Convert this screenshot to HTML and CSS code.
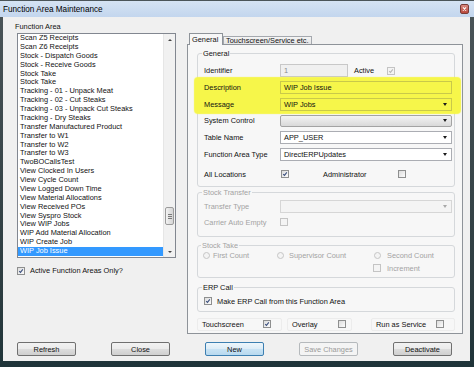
FILE: index.html
```html
<!DOCTYPE html>
<html>
<head>
	<title>Function Area Maintenance</title>
	<meta charset="UTF-8">
	<link rel="stylesheet" href="styles.css">
</head>
<body>
	<div class="window">
		<div class="titlebar">
			<span class="title">Function Area Maintenance</span>
			<span class="close-btn">
				<svg viewBox="0 0 9 10" width="9" height="10">
					<path d="M2.5 3 L6.5 7 M6.5 3 L2.5 7" stroke="#fff" stroke-width="1.3"/>
				</svg>
			</span>
		</div>

		<div class="client">
			<div class="main">
				<div class="left">
					<div class="caption">Function Area</div>
					<div class="listbox">
						<div class="list-items">
							<div class="list-item">Scan Z5 Receipts</div>
							<div class="list-item">Scan Z6 Receipts</div>
							<div class="list-item">Stock - Dispatch Goods</div>
							<div class="list-item">Stock - Receive Goods</div>
							<div class="list-item">Stock Take</div>
							<div class="list-item">Stock Take</div>
							<div class="list-item">Tracking - 01 - Unpack Meat</div>
							<div class="list-item">Tracking - 02 - Cut Steaks</div>
							<div class="list-item">Tracking - 03 - Unpack Cut Steaks</div>
							<div class="list-item">Tracking - Dry Steaks</div>
							<div class="list-item">Transfer Manufactured Product</div>
							<div class="list-item">Transfer to W1</div>
							<div class="list-item">Transfer to W2</div>
							<div class="list-item">Transfer to W3</div>
							<div class="list-item">TwoBOCallsTest</div>
							<div class="list-item">View Clocked In Users</div>
							<div class="list-item">View Cycle Count</div>
							<div class="list-item">View Logged Down Time</div>
							<div class="list-item">View Material Allocations</div>
							<div class="list-item">View Received POs</div>
							<div class="list-item">View Syspro Stock</div>
							<div class="list-item">View WIP Jobs</div>
							<div class="list-item">WIP Add Material Allocation</div>
							<div class="list-item">WIP Create Job</div>
							<div class="list-item selected">WIP Job Issue</div>
						</div>
						<div class="scrollbar">
							<div class="sb-btn"><span class="arrow-up"></span></div>
							<div class="sb-track">
								<div class="sb-thumb"><span class="grip"></span></div>
							</div>
							<div class="sb-btn"><span class="arrow-down"></span></div>
						</div>
					</div>
					<div class="check-row">
						<span class="check checked">
							<svg viewBox="0 0 8 8"><path d="M1.6 4.1 L3.3 5.9 L6.4 1.9"/></svg>
						</span>
						Active Function Areas Only?
					</div>
				</div>

				<div class="right">
					<div class="tabs">
						<div class="tab active">General</div>
						<div class="tab">Touchscreen/Service etc.</div>
					</div>
					<div class="tab-panel">
						<fieldset class="group group-general">
							<legend>General</legend>
							<div class="rows">
								<div class="field-row">
									<span class="label">Identifier</span>
									<div class="controls">
										<span class="textbox disabled id-box">1</span>
										<span class="active-label">Active</span>
										<span class="check checked disabled">
											<svg viewBox="0 0 8 8"><path d="M1.6 4.1 L3.3 5.9 L6.4 1.9"/></svg>
										</span>
									</div>
								</div>
								<div class="highlight">
									<div class="field-row">
										<span class="label">Description</span>
										<span class="textbox marked">WIP Job Issue</span>
									</div>
									<div class="field-row">
										<span class="label">Message</span>
										<div class="combo marked"><span>WIP Jobs</span><span class="arrow"></span></div>
									</div>
								</div>
								<div class="field-row">
									<span class="label">System Control</span>
									<div class="combo dropdown"><span></span><span class="arrow"></span></div>
								</div>
								<div class="field-row">
									<span class="label">Table Name</span>
									<div class="combo"><span>APP_USER</span><span class="arrow"></span></div>
								</div>
								<div class="field-row">
									<span class="label">Function Area Type</span>
									<div class="combo"><span>DirectERPUpdates</span><span class="arrow"></span></div>
								</div>
								<div class="field-row locations-row">
									<span class="label">All Locations</span>
									<div class="controls">
										<span class="check checked">
											<svg viewBox="0 0 8 8"><path d="M1.6 4.1 L3.3 5.9 L6.4 1.9"/></svg>
										</span>
										<span class="admin-label">Administrator</span>
										<span class="check"></span>
									</div>
								</div>
							</div>
						</fieldset>

						<fieldset class="group group-transfer disabled-group">
							<legend>Stock Transfer</legend>
							<div class="rows">
								<div class="field-row">
									<span class="label">Transfer Type</span>
									<div class="combo disabled"><span></span><span class="arrow"></span></div>
								</div>
								<div class="field-row short-row">
									<span class="label">Carrier Auto Empty</span>
									<span class="check disabled"></span>
								</div>
							</div>
						</fieldset>

						<fieldset class="group group-take disabled-group">
							<legend>Stock Take</legend>
							<div class="take-grid">
								<div class="option"><span class="radio"></span>First Count</div>
								<div class="option"><span class="radio"></span>Supervisor Count</div>
								<div class="option"><span class="radio"></span>Second Count</div>
								<div class="option increment"><span class="check disabled"></span>Increment</div>
							</div>
						</fieldset>

						<fieldset class="group group-erp">
							<legend>ERP Call</legend>
							<div class="option erp-option">
								<span class="check checked">
									<svg viewBox="0 0 8 8"><path d="M1.6 4.1 L3.3 5.9 L6.4 1.9"/></svg>
								</span>
								Make ERP Call from this Function Area
							</div>
						</fieldset>

						<div class="flags">
							<div class="flag flag-touch">
								<span class="flag-label">Touchscreen</span>
								<span class="check checked">
									<svg viewBox="0 0 8 8"><path d="M1.6 4.1 L3.3 5.9 L6.4 1.9"/></svg>
								</span>
							</div>
							<div class="flag flag-overlay">
								<span class="flag-label">Overlay</span>
								<span class="check"></span>
							</div>
							<div class="flag flag-service">
								<span class="flag-label">Run as Service</span>
								<span class="check"></span>
							</div>
						</div>
					</div>
				</div>
			</div>

			<div class="buttons">
				<button>Refresh</button>
				<button>Close</button>
				<button class="default">New</button>
				<button class="disabled">Save Changes</button>
				<button>Deactivate</button>
			</div>
		</div>
	</div>
</body>
</html>
```

FILE: styles.css
```css
* {
	box-sizing: border-box;
}

body {
	margin: 0;
	width: 474px;
	height: 367px;
	overflow: hidden;
	font-family: 'Liberation Sans', Arial, sans-serif;
	font-size: 7.4px;
	color: #111;
	background: #3a4548;
}

.window {
	width: 474px;
	height: 367px;
	display: flex;
	flex-direction: column;
	padding: 1px 4px 6px 3px;
	background: linear-gradient(to bottom, #4b5559, #2c3c40 80%, #1f3439);
}

/* title bar */
.titlebar {
	height: 16px;
	margin: 0 -4px 0 -3px;
	display: flex;
	align-items: center;
	justify-content: space-between;
	padding: 0 5px 0 3px;
	background: linear-gradient(to bottom, #d5e3f3, #c3d6ee);
}

.title {
	font-size: 8.2px;
	color: #000;
}

.close-btn {
	width: 9px;
	height: 10px;
	border-radius: 2px;
	background: linear-gradient(to bottom, #d88a80, #b9483c);
	border: 1px solid #7a3b35;
	display: flex;
	align-items: center;
	justify-content: center;
}

.close-btn svg {
	display: block;
}

.client {
	flex: 1;
	background: #f0f0f0;
	padding: 0 0 5px 14px;
	display: flex;
	flex-direction: column;
}

.main {
	display: flex;
	align-items: flex-start;
	height: 317px;
}

/* left column */
.left {
	width: 159px;
	padding-top: 5px;
}

.caption {
	line-height: 9px;
	margin-left: -2px;
}

.listbox {
	margin-top: 2px;
	height: 225px;
	border: 1px solid #828790;
	background: white;
	display: flex;
}

.list-items {
	flex: 1;
}

.list-item {
	line-height: 8.875px;
	height: 8.875px;
	padding-left: 2px;
	white-space: nowrap;
	overflow: hidden;
}

.list-item.selected {
	background: #3399ff;
	color: white;
}

.scrollbar {
	width: 12px;
	display: flex;
	flex-direction: column;
	background: #f1f1f1;
	border-left: 1px solid #e6e6e6;
}

.sb-btn {
	height: 11px;
	display: flex;
	align-items: center;
	justify-content: center;
}

.arrow-up {
	border-left: 2px solid transparent;
	border-right: 2px solid transparent;
	border-bottom: 2px solid #444;
}

.arrow-down {
	border-left: 2px solid transparent;
	border-right: 2px solid transparent;
	border-top: 2px solid #444;
}

.sb-track {
	flex: 1;
}

.sb-thumb {
	margin: 162px 1px 0 1px;
	height: 18px;
	border: 1px solid #9b9b9b;
	border-radius: 2px;
	background: linear-gradient(to right, #f3f3f3, #e2e2e2 50%, #d6d6d6);
	display: flex;
	align-items: center;
	justify-content: center;
}

.grip {
	width: 4px;
	height: 5px;
	background: repeating-linear-gradient(to bottom, #7a7a7a 0 1px, transparent 1px 2px);
}

.check-row {
	margin-top: 8px;
	height: 9px;
	display: flex;
	align-items: center;
	gap: 5px;
}

/* checkboxes and radios */
.check {
	width: 8px;
	height: 8px;
	flex: none;
	border: 1px solid #8e8f8f;
	background: linear-gradient(135deg, #dcdcdc, #fcfcfc);
	display: inline-block;
}

.check svg {
	display: block;
	width: 6px;
	height: 6px;
	fill: none;
	stroke: #3b4f7e;
	stroke-width: 1.4;
}

.check.disabled {
	border-color: #c4c4c4;
	background: #f4f4f4;
}

.check.disabled svg {
	stroke: #b8b8b8;
}

.radio {
	width: 7px;
	height: 7px;
	flex: none;
	border: 1px solid #c6c6c6;
	border-radius: 50%;
	background: #f4f4f4;
}

/* tabs */
.right {
	margin-left: 11px;
	margin-top: 16px;
	width: 276px;
}

.tabs {
	display: flex;
	align-items: flex-end;
	height: 11px;
	padding-left: 2px;
}

.tab {
	height: 8px;
	line-height: 7px;
	padding: 0 2px;
	border: 1px solid #a4a8ae;
	border-bottom: none;
	background: linear-gradient(to bottom, #f4f4f4, #e4e4e4);
	white-space: nowrap;
}

.tab.active {
	position: relative;
	z-index: 1;
	height: 12px;
	line-height: 11px;
	margin-bottom: -1px;
	width: 34px;
	border-color: #8e9399;
	background: #f7f7f7;
}

.tab-panel {
	height: 290px;
	border: 1px solid #8e9399;
	background: #f7f7f7;
	padding: 4px 7px 0 9px;
	overflow: hidden;
}

/* group boxes */
.group {
	margin: 0;
	padding: 0 2px 5px 6px;
	border: 1px solid #d5d8db;
	border-radius: 3px;
	min-width: 0;
}

legend {
	line-height: 9px;
	padding: 0 1px;
	margin-left: -2px;
}

.disabled-group,
.disabled-group legend {
	color: #a3a3a3;
}

.rows {
	display: flex;
	flex-direction: column;
	gap: 3.8px;
}

.group-general .rows {
	padding-top: 6px;
}

.field-row {
	display: flex;
	align-items: center;
	height: 13px;
}

.field-row .label {
	width: 76px;
	flex: none;
	white-space: nowrap;
}

.controls {
	display: flex;
	align-items: center;
}

.highlight {
	margin: -3px -8px -2.5px -9px;
	padding: 3px 8px 2.5px 9px;
	background: #f6f64a;
	border-radius: 3px;
	display: flex;
	flex-direction: column;
	gap: 3.8px;
	box-shadow: 0 0 1px 1px #f6f64a;
}

.locations-row {
	margin-top: 3px;
}

.locations-row .check:first-child {
	margin-left: 1px;
}

.admin-label {
	margin-left: 34px;
	width: 75px;
}

.id-box {
	width: 68px;
}

.active-label {
	margin-left: 6px;
	width: 33px;
}

/* text boxes and combos */
.textbox,
.combo {
	height: 13px;
	flex: 1;
	border: 1px solid #abadb3;
	background: white;
	padding: 0 3px;
	line-height: 11px;
	white-space: nowrap;
}

.textbox.disabled {
	flex: none;
	background: #f0f0f0;
	border-color: #c8c8c8;
	color: #8a8a8a;
}

.combo {
	display: flex;
	align-items: center;
	justify-content: space-between;
	padding-right: 4px;
}

.arrow {
	border-left: 2.5px solid transparent;
	border-right: 2.5px solid transparent;
	border-top: 3px solid #1a1a1a;
}

.marked {
	background: transparent;
	border-color: #c9c94a;
}

.combo.dropdown {
	height: 12px;
	border-color: #a3a3a3;
	border-radius: 2px;
	background: linear-gradient(to bottom, #f3f3f3, #e6e6e6 50%, #d9d9d9);
}

.combo.disabled {
	border-color: #d6d6d6;
	background: #f4f4f4;
}

.combo.disabled .arrow {
	border-top-color: #a8a8a8;
}

/* group positions */
.group-transfer {
	margin-top: 1px;
	padding-bottom: 9px;
}

.group-transfer .rows {
	padding-top: 3px;
	gap: 5px;
}

.short-row {
	height: 9px;
}

.group-take {
	margin-top: 4px;
	padding: 0 2px 4px 5px;
}

.take-grid {
	padding-top: 1px;
	display: grid;
	grid-template-columns: 74px 97px 1fr;
	grid-auto-rows: 9px;
	row-gap: 4px;
}

.option {
	display: flex;
	align-items: center;
	gap: 3px;
	white-space: nowrap;
}

.option.increment {
	grid-column: 3;
	gap: 6px;
	margin-left: -1px;
}

.group-take .option:nth-child(2) .radio {
	margin-right: 2px;
}

.group-take .option:nth-child(3) .radio {
	margin-right: 3px;
}

.group-erp {
	margin-top: 5px;
	padding: 0 2px 5px 6px;
}

.erp-option {
	margin-top: 5px;
	height: 9px;
	gap: 5px;
}

/* bottom flags */
.flags {
	margin-top: 6px;
	display: flex;
	height: 13px;
}

.flag {
	display: flex;
	align-items: center;
	padding-left: 4px;
	border: 1px solid #ececec;
	border-radius: 2px;
}

.flag-touch {
	width: 85px;
}

.flag-touch .flag-label {
	width: 61px;
}

.flag-overlay {
	width: 65px;
	margin-left: 5px;
}

.flag-overlay .flag-label {
	width: 46px;
}

.flag-service {
	width: 84px;
	margin-left: 19px;
}

.flag-service .flag-label {
	width: 60px;
}

/* buttons */
.buttons {
	margin-top: 8px;
	display: flex;
	gap: 35px;
}

button {
	width: 59px;
	height: 14px;
	padding: 0;
	font-family: inherit;
	font-size: 7.4px;
	color: #111;
	border: 1px solid #707070;
	border-radius: 2px;
	background: linear-gradient(to bottom, #f2f2f2, #ebebeb 50%, #dddddd 50%, #cfcfcf);
}

button.default {
	border-color: #3c7fb1;
	background: linear-gradient(to bottom, #eef6fb, #dcecf7 50%, #c9e3f4 50%, #b8d9ef);
}

button.disabled {
	border-color: #b5b9bc;
	background: #f4f4f4;
	color: #9a9a9a;
}
```
